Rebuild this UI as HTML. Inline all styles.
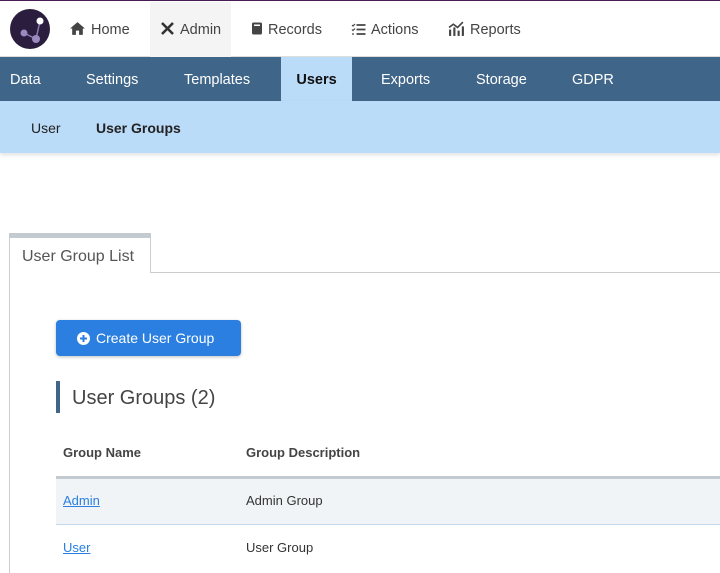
<!DOCTYPE html>
<html><head><style>
*{margin:0;padding:0;box-sizing:border-box}
body{width:720px;height:572px;overflow:hidden;background:#fff;font-family:"Liberation Sans",sans-serif;color:#333;position:relative}
.top{position:absolute;left:0;top:0;width:720px;height:57px;border-top:1px solid #4a1a55;border-bottom:1px solid #ddd;background:#fff}
.logo{position:absolute;left:10px;top:8px;width:40px;height:40px;border-radius:50%;background:#2b1d3d}
.ti{position:absolute;top:1px;height:55px;line-height:56px;font-size:14.5px;color:#444}
.ti svg{vertical-align:-2px;margin-right:5px}
.nav{position:absolute;left:0;top:57px;width:720px;height:44px;background:#3f6589}
.nav span{position:absolute;top:0;line-height:46px;font-size:14.5px;color:#fff}
.sub{position:absolute;left:0;top:101px;width:720px;height:52px;background:#bbdcf8;box-shadow:0 2px 4px rgba(0,0,0,.12)}
.sub span{position:absolute;line-height:55px;font-size:14px;color:#222}
</style></head><body>
<div class="top">
 <div class="logo"><svg width="40" height="40"><path d="M30 12 L26 30 L14 24" stroke="#8a7ab0" stroke-width="1.5" fill="none"/><circle cx="30" cy="12" r="3.5" fill="#fff"/><circle cx="26" cy="30" r="4" fill="#9a8ac0"/><circle cx="14" cy="24" r="3.5" fill="#9a8ac0"/></svg></div>
 <div class="ti" style="left:69px"><svg width="17" height="15" viewBox="0 0 16 14"><path d="M8 1 L1 7 L3 7 L3 13 L6.5 13 L6.5 9 L9.5 9 L9.5 13 L13 13 L13 7 L15 7 Z" fill="#444"/></svg>Home</div>
 <div class="ti" style="left:150px;width:81px;background:#f4f4f4;padding-left:10px"><svg width="15" height="15" viewBox="0 0 15 15"><path d="M2 2 L13 13 M13 2 L2 13" stroke="#333" stroke-width="2.6"/></svg>Admin</div>
 <div class="ti" style="left:251px"><svg width="12" height="15" viewBox="0 0 12 14"><rect x="1" y="1" width="10" height="12" rx="1.5" fill="#444"/><rect x="3" y="3" width="6" height="1.5" fill="#fff"/></svg>Records</div>
 <div class="ti" style="left:351px"><svg width="15" height="13" viewBox="0 0 14 13"><path d="M5 2h9M5 6.5h9M5 11h9" stroke="#444" stroke-width="1.8"/><path d="M0.5 2l1 1 2-2M0.5 6.5l1 1 2-2M0.5 11h2" stroke="#444" stroke-width="1.2" fill="none"/></svg>Actions</div>
 <div class="ti" style="left:448px"><svg width="17" height="15" viewBox="0 0 16 14"><path d="M1 6 L5 3 L9 6 L14 1" stroke="#444" stroke-width="1.5" fill="none"/><rect x="1" y="8" width="2" height="6" fill="#444"/><rect x="5" y="6" width="2" height="8" fill="#444"/><rect x="9" y="9" width="2" height="5" fill="#444"/><rect x="13" y="5" width="2" height="9" fill="#444"/></svg>Reports</div>
</div>
<div class="nav">
 <span style="left:10px">Data</span><span style="left:86px">Settings</span><span style="left:184px">Templates</span>
 <span style="left:281px;width:71px;height:44px;background:#bbdcf8;color:#111;font-weight:bold;text-align:center">Users</span>
 <span style="left:381px">Exports</span><span style="left:476px">Storage</span><span style="left:572px">GDPR</span>
</div>
<div class="sub"><span style="left:31px">User</span><span style="left:96px;font-weight:bold">User Groups</span></div>
<div style="position:absolute;left:151px;top:272px;width:569px;height:1px;background:#ccc"></div>
<div style="position:absolute;left:9px;top:233px;width:142px;height:40px;border-top:5px solid #c3cbd0;border-left:1px solid #ccc;border-right:1px solid #ccc;background:#fff;font-size:16px;color:#555;padding:10px 0 0 12px">User Group List</div>
<div style="position:absolute;left:9px;top:273px;width:1px;height:300px;background:#ccc"></div>
<div style="position:absolute;left:56px;top:320px;width:185px;height:36px;background:#2a7fe0;border-radius:4px;box-shadow:0 1px 3px rgba(0,0,0,.25);color:#fff;font-size:14px;line-height:37px;padding-left:21px"><svg width="13" height="13" viewBox="0 0 13 13" style="vertical-align:-2px;margin-right:6px"><circle cx="6.5" cy="6.5" r="6.5" fill="#fff"/><path d="M6.5 3v7M3 6.5h7" stroke="#2a7fe0" stroke-width="2"/></svg>Create User Group</div>
<div style="position:absolute;left:56px;top:381px;width:4px;height:32px;background:#3f6589"></div>
<div style="position:absolute;left:72px;top:387px;font-size:20px;color:#444">User Groups (2)</div>
<div style="position:absolute;left:63px;top:445px;font-size:13px;font-weight:bold;color:#444">Group Name</div>
<div style="position:absolute;left:246px;top:445px;font-size:13px;font-weight:bold;color:#444">Group Description</div>
<div style="position:absolute;left:56px;top:476px;width:664px;height:3px;background:#c3cbd0"></div>
<div style="position:absolute;left:56px;top:479px;width:664px;height:46px;background:#f0f4f7;border-bottom:1px solid #c2d8ef"></div>
<div style="position:absolute;left:63px;top:493px;font-size:13px;color:#2a7fe0;text-decoration:underline">Admin</div>
<div style="position:absolute;left:246px;top:493px;font-size:13px;color:#333">Admin Group</div>
<div style="position:absolute;left:63px;top:540px;font-size:13px;color:#2a7fe0;text-decoration:underline">User</div>
<div style="position:absolute;left:246px;top:540px;font-size:13px;color:#333">User Group</div>
</body></html>
